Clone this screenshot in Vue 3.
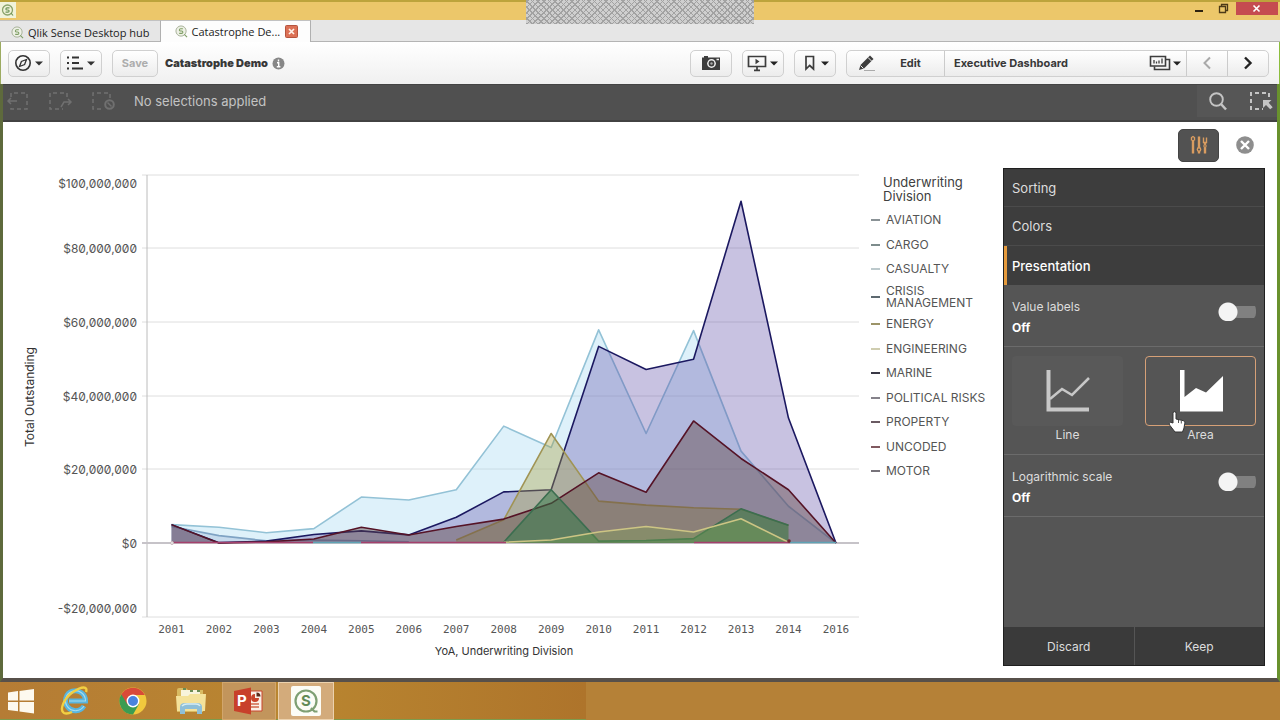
<script setup>
import { ref } from 'vue'

const years = [2001, 2002, 2003, 2004, 2005, 2006, 2007, 2008, 2009, 2010, 2011, 2012, 2013, 2014, 2016]
const ZERO = 375
const xAt = (i) => 168.5 + i * 47.46
const yAt = (m) => ZERO - m * 3.675

const series = [
  { name: 'CASUALTY', line: '#93c2d6', fill: '#a3d8f0', alpha: 0.36, start: 0, data: [5, 4.3, 2.8, 3.9, 12.5, 11.7, 14.5, 31.8, 26, 58, 29.8, 57.8, 25, 10, 0] },
  { name: 'CARGO', line: '#7fa3c4', fill: '#8fa8d0', alpha: 0.3, start: 0, data: [4.5, 2, 0.6, 0.8, 0.6, 0.3] },
  { name: 'MARINE', line: '#1b1860', fill: '#5e4ba6', alpha: 0.34, start: 0, data: [5, 0.1, 0.5, 2.3, 3.3, 2.2, 7, 13.9, 14.5, 53.5, 47.2, 50, 93, 34, 0] },
  { name: 'ENERGY', line: '#a09454', fill: '#a8a040', alpha: 0.38, start: 6, data: [0.8, 6.3, 29.8, 11.4, 10.3, 9.6, 9.2, 4.8] },
  { name: 'PROPERTY', line: '#551326', fill: '#5f4444', alpha: 0.44, start: 0, data: [5, 0, 0.3, 1.1, 4.3, 2.2, 4.5, 6.5, 10.8, 19.1, 13.8, 33.2, 23, 14.5, 0] },
  { name: 'CRISIS MANAGEMENT', line: '#3c6e50', fill: '#2f7a48', alpha: 0.5, start: 7, data: [0.2, 14.5, 0.5, 0.7, 1.2, 9.3, 4.8] },
  { name: 'ENGINEERING', line: '#cdc584', fill: '#7fae4c', alpha: 0.28, start: 7, data: [0.2, 0.8, 3, 4.5, 3, 6.6, 0.2] }
]
const points = (s) => s.data.map((v, i) => `${xAt(s.start + i)},${yAt(v)}`).join(' ')
const area = (s) => `${xAt(s.start)},${ZERO} ${points(s)} ${xAt(s.start + s.data.length - 1)},${ZERO}`

const ticks = [
  { label: '$100,000,000', y: 7, text: 20 },
  { label: '$80,000,000', y: 80, text: 85 },
  { label: '$60,000,000', y: 154, text: 159 },
  { label: '$40,000,000', y: 228, text: 233 },
  { label: '$20,000,000', y: 301, text: 306 },
  { label: '$0', y: 375, text: 380 },
  { label: '-$20,000,000', y: 449, text: 445 }
]

const legend = [
  { name: 'AVIATION', color: '#8a9296' },
  { name: 'CARGO', color: '#7d8c8c' },
  { name: 'CASUALTY', color: '#bcc9cc' },
  { name: 'CRISIS MANAGEMENT', color: '#5d6970' },
  { name: 'ENERGY', color: '#9c9468' },
  { name: 'ENGINEERING', color: '#cfcdb0' },
  { name: 'MARINE', color: '#3a3846' },
  { name: 'POLITICAL RISKS', color: '#85828a' },
  { name: 'PROPERTY', color: '#6a5a62' },
  { name: 'UNCODED', color: '#80595f' },
  { name: 'MOTOR', color: '#77737a' }
]

const chartType = ref('area')
const valueLabels = ref(false)
const logScale = ref(false)
</script>

<template>
  <div class="desktop">
    <header class="titlebar">
      <svg class="app-mark" viewBox="0 0 16 16" aria-hidden="true"><rect width="16" height="16" fill="#f1f3da" /><circle cx="7.500" cy="8" r="5" fill="none" stroke="#8aa36a" stroke-width="1.300" /><path d="M9.500 5.800H7a1.100 1.100 0 0 0 0 2.200h1a1.100 1.100 0 0 1 0 2.200H5.500M11 11l2 2.500" fill="none" stroke="#6d9455" stroke-width="1.200" /></svg>
      <div class="hatch"></div>
      <div class="window-buttons">
        <button aria-label="Minimize"><svg width="10" height="12" viewBox="0 0 10 12"><path d="M1 8h8" stroke="#2d2210" stroke-width="2" /></svg></button>
        <button aria-label="Restore"><svg width="12" height="12" viewBox="0 0 12 12"><path d="M1.500 3.500h6v6h-6zM3.500 3.500V1.500h6v6h-2" fill="none" stroke="#4d3a18" stroke-width="1.300" /></svg></button>
        <button class="close" aria-label="Close"><svg width="10" height="10" viewBox="0 0 10 10"><path d="M1.500 1.500l6 6M7.500 1.500l-6 6" stroke="#fff" stroke-width="1.600" /></svg></button>
      </div>
    </header>

    <nav class="tabs">
      <div class="tab">
        <svg class="q" viewBox="0 0 14 14" aria-hidden="true"><circle cx="6.500" cy="6.500" r="5.500" fill="#eef1e6" stroke="#a3ad95" /><path d="M8.500 4H6a1.200 1.200 0 0 0 0 2.500h1.200a1.200 1.200 0 0 1 0 2.500H4.500M10 10l3 3" fill="none" stroke="#7f9f66" stroke-width="1.200" /></svg>
        <a href="#hub">Qlik Sense Desktop hub</a>
      </div>
      <div class="tab active">
        <svg class="q" viewBox="0 0 14 14" aria-hidden="true"><circle cx="6.500" cy="6.500" r="5.500" fill="#eef1e6" stroke="#a3ad95" /><path d="M8.500 4H6a1.200 1.200 0 0 0 0 2.500h1.200a1.200 1.200 0 0 1 0 2.500H4.500M10 10l3 3" fill="none" stroke="#7f9f66" stroke-width="1.200" /></svg>
        <a href="#app">Catastrophe De...</a>
        <button aria-label="Close tab"><svg width="13" height="13" viewBox="0 0 13 13"><rect x=".5" y=".5" width="12" height="12" rx="1" fill="#dc7156" stroke="#b5543e" /><path d="M4 4l5 5M9 4l-5 5" stroke="#fff3ea" stroke-width="1.700" /></svg></button>
      </div>
    </nav>

    <div class="toolbar">
      <button class="tool" aria-label="Navigation">
        <svg width="30" height="18" viewBox="0 0 30 18"><circle cx="9" cy="9" r="7.200" fill="none" stroke="#333" stroke-width="1.600" /><path d="M12.500 5.500L10.600 10.600 5.500 12.500 7.400 7.400z" fill="none" stroke="#333" stroke-width="1.300" /><path d="M21 7.500h8l-4 4z" fill="#333" /></svg>
      </button>
      <button class="tool" aria-label="Menu">
        <svg width="30" height="18" viewBox="0 0 30 18"><path d="M1 3.500h2M1 9h2M1 14.500h2M6 3.500h7M6 9h7M6 14.500h11" stroke="#333" stroke-width="1.800" /><path d="M21 7.500h8l-4 4z" fill="#333" /></svg>
      </button>
      <button class="tool save" disabled>Save</button>
      <strong class="app-name">Catastrophe Demo</strong>
      <svg class="info" width="13" height="13" viewBox="0 0 13 13" aria-hidden="true"><circle cx="6.500" cy="6.500" r="6" fill="#878787" /><path d="M6.500 2.500v2M5 5.800h1.700v4M4.800 9.800h3.600" stroke="#fff" stroke-width="1.400" fill="none" /></svg>
      <div class="spacer"></div>
      <button class="tool" aria-label="Snapshot">
        <svg width="20" height="18" viewBox="0 0 20 18"><path d="M1 3.500h2V2h4v1.500h12V16H1z" fill="#3d3d3d" /><circle cx="10.500" cy="9.500" r="4.400" fill="#eee" /><circle cx="10.500" cy="9.500" r="2.900" fill="#3d3d3d" /><circle cx="10.500" cy="9.500" r="1.200" fill="#aaa" /><path d="M15.500 5.500H18" stroke="#eee" stroke-width="1.500" /></svg>
      </button>
      <button class="tool" aria-label="Storytelling">
        <svg width="32" height="18" viewBox="0 0 32 18"><path d="M1.500 2.500h17v10h-17zM10 12.500V16M7 16.300h6" fill="none" stroke="#3d3d3d" stroke-width="1.700" /><path d="M8.500 4.800v5.400l4-2.700z" fill="#3d3d3d" /><path d="M23 7.500h8L27 11.500z" fill="#222" /></svg>
      </button>
      <button class="tool" aria-label="Bookmarks">
        <svg width="28" height="18" viewBox="0 0 28 18"><path d="M5 2.500h7.500V15L8.700 11.500 5 15z" fill="none" stroke="#3d3d3d" stroke-width="1.700" /><path d="M20 7.500h8l-4 4z" fill="#222" /></svg>
      </button>
      <div class="sheet-group">
        <button class="edit">
          <svg width="18" height="18" viewBox="0 0 18 18"><path d="M1 16l1.500-5L12 1.500 15.500 5 6 14.500z" fill="#3d3d3d" /><path d="M10 3.500l3.500 3.500M2.500 11.500l3 3" stroke="#eee" /><path d="M6 16.500h11" stroke="#aaa" /></svg>
          <span>Edit</span>
        </button>
        <button class="sheet">
          <span>Executive Dashboard</span>
          <svg width="32" height="18" viewBox="0 0 32 18"><path d="M1.500 2.500h15v9.500h-15z" fill="none" stroke="#3d3d3d" stroke-width="1.600" /><path d="M17 5.500h3.500v10H5.500V12.500" fill="none" stroke="#3d3d3d" stroke-width="1.600" /><path d="M5 6v3.500M7.500 7.500v2M10 6.500v3M13 4.500v5" stroke="#3d3d3d" stroke-width="1.300" /><path d="M24 7.500h8l-4 4z" fill="#222" /></svg>
        </button>
        <button class="step" aria-label="Previous sheet"><svg width="10" height="14" viewBox="0 0 10 14"><path d="M8 1.500L2.500 7 8 12.500" fill="none" stroke="#a9a9a9" stroke-width="2" /></svg></button>
        <button class="step" aria-label="Next sheet"><svg width="10" height="14" viewBox="0 0 10 14"><path d="M2 1.500L7.500 7 2 12.500" fill="none" stroke="#222" stroke-width="2.400" /></svg></button>
      </div>
    </div>

    <div class="frame">
      <div class="selections">
        <button disabled aria-label="Step back"><svg width="24" height="20" viewBox="0 0 24 20"><path d="M5 6V2h16v16H5v-4" fill="none" stroke="#707070" stroke-width="1.500" stroke-dasharray="4 3" /><path d="M11 10H2M5 7l-3 3 3 3" fill="none" stroke="#707070" stroke-width="1.500" /></svg></button>
        <button disabled aria-label="Step forward"><svg width="25" height="20" viewBox="0 0 25 20"><path d="M19 6V2H2v16h13" fill="none" stroke="#707070" stroke-width="1.500" stroke-dasharray="4 3" /><path d="M13 16l3-5h7M20 8l3 3-3 3" fill="none" stroke="#707070" stroke-width="1.500" /></svg></button>
        <button disabled aria-label="Clear all selections"><svg width="25" height="20" viewBox="0 0 25 20"><path d="M19 7V2H2v16h10" fill="none" stroke="#707070" stroke-width="1.500" stroke-dasharray="4 3" /><circle cx="18.500" cy="13.500" r="4.300" fill="none" stroke="#707070" stroke-width="2" /><path d="M16.500 11.500l4 4" stroke="#707070" stroke-width="1.400" /></svg></button>
        <span class="none">No selections applied</span>
        <div class="right">
          <button aria-label="Search"><svg width="20" height="20" viewBox="0 0 20 20"><circle cx="8.500" cy="8.500" r="6.300" fill="none" stroke="#c4c4c4" stroke-width="1.900" /><path d="M13 13l5 5.500" stroke="#c4c4c4" stroke-width="2.500" /></svg></button>
          <button aria-label="Selections tool"><svg width="24" height="20" viewBox="0 0 24 20"><path d="M20 6V2H2v16h12" fill="none" stroke="#c4c4c4" stroke-width="2" stroke-dasharray="4 3" /><path d="M14 9h8.500l-2.800 2.800 4 4.500-2.500 2-4.200-4.200L14 17z" fill="#c4c4c4" /></svg></button>
        </div>
      </div>

      <main class="content">
        <div class="chart-tools">
          <button class="explore" aria-label="Exploration menu"><svg width="20" height="20" viewBox="0 0 20 20"><path d="M4 5v13.500M10 1.500v17M16 8v10.500" stroke="#d99c60" stroke-width="2.400" /><path d="M2.500 5.500v-3L4 1.500l1.500 1v3M14.500 2.500v5h3v-5" fill="none" stroke="#d99c60" stroke-width="1.400" /><circle cx="10" cy="14.500" r="1.700" fill="#525252" stroke="#d99c60" stroke-width="1.400" /><circle cx="16" cy="11" r="1.200" fill="#525252" stroke="#d99c60" /></svg></button>
          <button class="exit" aria-label="Close exploration"><svg width="18" height="18" viewBox="0 0 18 18"><circle cx="9" cy="9" r="8.800" fill="#8e8e8e" /><path d="M5 5l8 8M13 5l-8 8" stroke="#fff" stroke-width="2.400" /></svg></button>
        </div>

        <svg class="chart" viewBox="0 0 861 498" role="img" aria-label="Total Outstanding by year and underwriting division">
          <g class="grid">
            <line v-for="t in ticks" :key="t.label" x1="139" x2="856" :y1="t.y" :y2="t.y" />
            <line class="axis" x1="144" x2="144" y1="7" y2="449" />
          </g>
          <line class="zero" x1="139" x2="856" y1="375" y2="375" />
          <g v-for="s in series" :key="s.name">
            <polygon :points="area(s)" :fill="s.fill" :fill-opacity="s.alpha" />
            <polyline :points="points(s)" :stroke="s.line" fill="none" stroke-width="1.600" stroke-linejoin="round" />
          </g>
          <path d="M169 374.500h141M358 374.500h145M691 374.500h96" stroke="#a5406c" stroke-width="1.500" />
          <path d="M310 374.500h48M787 374.500h46" stroke="#5fa3b5" stroke-width="1.500" />
          <circle cx="169" cy="375" r="1.500" fill="#eee" stroke="#c8b8bc" />
          <circle cx="786" cy="373" r="1.800" fill="#6d2b33" />
          <g class="y-label">
            <text v-for="t in ticks" :key="t.label" x="134" :y="t.text">{{ t.label }}</text>
          </g>
          <g class="x-label">
            <text v-for="(y, i) in years" :key="y" :x="xAt(i)" y="465">{{ y }}</text>
          </g>
          <text class="axis-title" x="501" y="487">YoA, Underwriting Division</text>
          <text class="axis-title side" transform="translate(31 229) rotate(-90)">Total Outstanding</text>
        </svg>

        <section class="legend">
          <h2>Underwriting Division</h2>
          <ul>
            <li v-for="l in legend" :key="l.name"><i :style="{ background: l.color }"></i><span>{{ l.name }}</span></li>
          </ul>
        </section>

        <aside class="panel">
          <button class="head">Sorting</button>
          <button class="head">Colors</button>
          <button class="head current">Presentation</button>
          <div class="option">
            <label for="value-labels">Value labels<b>{{ valueLabels ? 'On' : 'Off' }}</b></label>
            <input id="value-labels" v-model="valueLabels" class="switch" type="checkbox" />
          </div>
          <div class="types">
            <label class="type">
              <input v-model="chartType" type="radio" name="type" value="line" />
              <span class="tile"><svg width="44" height="44" viewBox="0 0 44 44"><path d="M2.500 1v39.500H43" fill="none" stroke="#c8c8c8" stroke-width="4" /><path d="M4 30l12-10 10 6L43 9" fill="none" stroke="#c8c8c8" stroke-width="2.500" /></svg></span>
              <span>Line</span>
            </label>
            <label class="type">
              <input v-model="chartType" type="radio" name="type" value="area" />
              <span class="tile"><svg width="44" height="44" viewBox="0 0 44 44"><path d="M1 1h4.500v27L17 19l10 4.500L44 7v35.500H1z" fill="#fff" /></svg></span>
              <span>Area</span>
              <svg class="pointer" width="18" height="22" viewBox="0 0 18 22" aria-hidden="true"><path d="M5 12V2.200a1.500 1.500 0 0 1 3 0V8l7 1.600c1.500.4 2 1.200 1.800 2.600L16 17l-1.500 4H7L2 14.500c-1-1.800-.8-3 .6-3.200z" fill="#fff" stroke="#333" stroke-width="1" /><path d="M10.500 9v3M13.300 9.500v3" stroke="#555" /></svg>
            </label>
          </div>
          <div class="option">
            <label for="log-scale">Logarithmic scale<b>{{ logScale ? 'On' : 'Off' }}</b></label>
            <input id="log-scale" v-model="logScale" class="switch" type="checkbox" />
          </div>
          <footer>
            <button>Discard</button>
            <button>Keep</button>
          </footer>
        </aside>
      </main>
    </div>

    <nav class="taskbar">
      <button class="start" aria-label="Start"><svg width="28" height="26" viewBox="0 0 28 26"><path d="M1 4.500l10-1.400v9.400H1zM12.500 2.900L27 1v11.500H12.500zM1 14h10v9.300L1 22zM12.500 14H27v11.500L12.500 23.500z" fill="#fdf9ef" /></svg></button>
      <button aria-label="Internet Explorer"><svg width="32" height="32" viewBox="0 0 32 32"><path d="M25 21a10 10 0 1 1 1.500-5H10" fill="none" stroke="#58b6df" stroke-width="5" /><path d="M25 21a10 10 0 1 1 1.500-5H10" fill="none" stroke="#a4dcef" stroke-width="1.200" /><path d="M5 28C0 25 5 13 14 7S29 1 27 7M5 28c3 1.500 6 0 8-1" fill="none" stroke="#f2cf42" stroke-width="2.400" /></svg></button>
      <button aria-label="Chrome"><svg width="28" height="28" viewBox="0 0 28 28"><circle cx="14" cy="14" r="13.500" fill="#f1c93d" /><path d="M14 14L2.300 7.200A13.500 13.500 0 0 0 14 27.500l5.800-10z" fill="#3c9c52" /><path d="M14 14v-6h11.900A13.500 13.500 0 0 0 2.300 7.200L8.500 17.500z" fill="#d94a38" /><circle cx="14" cy="14" r="6.400" fill="#fff" /><circle cx="14" cy="14" r="5" fill="#4a83dd" /></svg></button>
      <button aria-label="File Explorer"><svg width="32" height="30" viewBox="0 0 32 30"><path d="M2 4q0-2 2-2h7l2 2h15v22H2z" fill="#d9bb62" /><path d="M6 4h19v8H6z" fill="#f8f4dc" /><path d="M8 3h3M15 5h3M22 5h3" stroke="#6b8c52" stroke-width="2" /><path d="M1 10h12l2-2h16l-1 17H2z" fill="#f4e29a" /><path d="M5 28v-7q0-4 5-4h12q5 0 5 4v7h-5v-5H10v5z" fill="#8ebfd8" /><path d="M7 20q2-2 5-2h9q3 0 4 2" fill="none" stroke="#d6edf3" stroke-width="1.500" /></svg></button>
      <button class="open" aria-label="PowerPoint"><svg width="30" height="28" viewBox="0 0 30 28"><path d="M15 4h14v20H15z" fill="#fbf1e8" stroke="#c9452c" /><path d="M18 17h8M18 20h8" stroke="#d16a4c" stroke-width="1.500" /><path d="M22 7a4 4 0 1 0 4 4h-4z" fill="#c9452c" /><path d="M23.500 5.500v4h4a4 4 0 0 0-4-4z" fill="#5c2c1c" /><path d="M1 4l17-3.500v27L1 24z" fill="#c8402a" /><text class="mark-p" x="4" y="19">P</text></svg></button>
      <button class="open focus" aria-label="Qlik Sense"><svg width="30" height="30" viewBox="0 0 30 30"><rect width="30" height="30" rx="2" fill="#fcfcf6" /><circle cx="15" cy="15" r="10.500" fill="none" stroke="#7e9f73" stroke-width="2.200" /><path d="M20 22l3.500 3.500h3" fill="none" stroke="#7e9f73" stroke-width="2.200" /><text class="mark-s" x="10" y="20">S</text></svg></button>
    </nav>
  </div>
</template>

<style>
body { background: #b58137; }
</style>

<style scoped>
* { box-sizing: border-box; }
button { font: inherit; color: inherit; border: 0; padding: 0; background: none; display: flex; align-items: center; justify-content: center; }
a { color: inherit; text-decoration: none; }
svg { display: block; flex: none; }
.desktop { min-height: 100vh; display: flex; flex-direction: column; font-family: Inter, "Liberation Sans", sans-serif; font-size: 12px; color: #404040; }
.titlebar { position: relative; height: 20px; background: #ecc76a; border-top: 2px solid #bda43c; display: flex; justify-content: space-between; }
.app-mark { width: 16px; height: 16px; }
.hatch { position: absolute; z-index: 1; top: -2px; left: 50%; width: 228px; height: 24px; transform: translateX(-50%); background: repeating-linear-gradient(45deg, #a2a2a2 0 1px, transparent 1px 4px), repeating-linear-gradient(-45deg, #a2a2a2 0 1px, transparent 1px 4px), #cfcfcf; }
.window-buttons { display: flex; height: 13px; padding-right: 2px; }
.window-buttons button { width: 25px; }
.window-buttons .close { width: 42px; background: #c54c50; }
.tabs { height: 22px; background: #e6e6e6; border-bottom: 1px solid #b4b4b4; display: flex; font-family: "Open Sans", sans-serif; font-size: 11px; color: #222; }
.tab { display: flex; align-items: center; gap: 4px; padding: 2px 10px 0 11px; height: 21px; border-right: 1px solid #b0b0b0; border-top: 1px solid #c2c2c2; white-space: nowrap; }
.tab.active { height: 22px; background: #fdfdfd; padding: 0 12px 0 14px; }
.q { width: 13px; height: 13px; }
.tab button { margin-left: 1px; }
.toolbar { height: 42px; flex: none; display: flex; align-items: center; padding: 0 10px 0 7px; gap: 10px; background: linear-gradient(#fff, #f0f0f0); border-left: 1px solid #9cab61; border-right: 1px solid #8cbd3e; font-weight: 700; font-size: 11px; color: #383838; }
.tool, .sheet-group { height: 27px; border: 1px solid #d0d0d0; border-radius: 5px; background: linear-gradient(#fff, #ececec); }
.tool { width: 42px; }
.save { width: 46px; color: #adadad; }
.app-name { margin-left: -3px; }
.info { margin-left: -6px; }
.spacer { flex: 1; }
.sheet-group { display: flex; }
.sheet-group button + button { border-left: 1px solid #cbcbcb; }
.edit { width: 97px; gap: 24px; padding-right: 12px !important; }
.sheet { width: 242px; justify-content: space-between !important; padding: 0 5px 0 9px !important; }
.step { width: 41px; }
.frame { flex: 1; display: flex; flex-direction: column; border: 3px solid #5e6a3c; border-top: 0; border-right-color: #69922d; border-bottom: 4px solid #57504a; }
.selections { height: 38px; flex: none; background: #505050; border-top: 1px solid #444; border-bottom: 2px solid #424242; display: flex; align-items: center; padding: 0 0 3px 3px; gap: 18px; }
.none { color: #c3c3c3; font-size: 13px; }
.right { margin-left: auto; height: 100%; display: flex; align-items: center; gap: 21px; padding: 0 4px 0 11px; background: #565656; }
.content { flex: 1; background: #fff; display: grid; grid-template-columns: minmax(0, 1fr) 139px 262px; grid-template-rows: 46px minmax(498px, 1fr); padding: 0 12px 12px 0; }
.chart-tools { grid-column: 1 / -1; display: flex; justify-content: flex-end; align-items: center; gap: 17px; padding-right: 11px; }
.explore { width: 41px; height: 33px; border-radius: 5px; background: #525252; border: 1px solid #444; }
.chart { width: 100%; align-self: start; }
.grid line { stroke: #dedede; }
.grid .axis { stroke: #bcbcbc; }
.zero { stroke: #c6c3c8; stroke-width: 2px; }
.chart text { font-family: Inter, sans-serif; fill: #555; }
.y-label text { font-size: 12px; text-anchor: end; font-feature-settings: "zero"; }
.x-label text { font-size: 11px; text-anchor: middle; font-family: "DejaVu Sans Mono", monospace; }
.chart .axis-title { font-size: 11px; text-anchor: middle; fill: #333; }
.chart .side { font-size: 12px; }
.mark-p, .mark-s { font-size: 15px; font-weight: 700; fill: #fff; }
.mark-s { fill: #638b58; }
.legend { padding: 7px 0 0 7px; color: #555; }
.legend h2 { margin: 0 0 8px 12px; width: 100px; font-size: 13px; line-height: 14px; font-weight: 400; color: #404040; }
.legend ul { list-style: none; margin: 0; padding: 0; height: 269px; display: flex; flex-direction: column; justify-content: space-between; }
.legend li { display: flex; align-items: center; gap: 6px; min-height: 18px; line-height: 12px; }
.legend i { width: 9px; height: 2px; flex: none; }
.panel { display: flex; flex-direction: column; background: #555; border: 1px solid #1f1f1f; border-top: 0; box-shadow: inset 0 1px #1f1f1f; color: #ddd; }
.head { height: 39px; flex: none; justify-content: flex-start; padding-left: 8px; background: #3d3d3d; border-bottom: 1px solid #4b4b4b; font-size: 13px; }
.head:first-child { border-top: 1px solid #1f1f1f; }
.head.current { border-left: 3px solid #e59a3c; padding-left: 5px; color: #fff; border-bottom: 0; font-weight: 500; }
.option { display: flex; justify-content: space-between; align-items: flex-start; padding: 11px 8px 8px; border-bottom: 1px solid #6b6b6b; height: 62px; }
.option label { line-height: 21px; display: flex; flex-direction: column; }
.option b { color: #fff; }
.switch { appearance: none; margin: 6px 0 0; width: 38px; height: 19px; background: radial-gradient(circle at 10px 10px, #f4f4f4 9px, transparent 10px), linear-gradient(#808080, #808080) 8px 4px / 30px 12px no-repeat; border-radius: 8px; }
.switch:checked { background: radial-gradient(circle at 28px 10px, #f4f4f4 9px, transparent 10px), linear-gradient(#7aa34c, #7aa34c) 0 4px / 30px 12px no-repeat; }
.types { height: 108px; display: flex; justify-content: space-between; padding: 9px 8px 0; border-bottom: 1px solid #6b6b6b; }
.type { position: relative; width: 111px; display: flex; flex-direction: column; align-items: center; gap: 1px; }
.type input { position: absolute; opacity: 0; margin: 0; }
.tile { width: 100%; height: 70px; border: 1px solid transparent; border-radius: 4px; background: #595959; display: flex; align-items: center; justify-content: center; }
.type input:checked + .tile { background: transparent; border-color: #d6a077; }
.pointer { position: absolute; left: 23px; top: 55px; }
.panel footer { margin-top: auto; height: 38px; display: flex; background: #3a3a3a; }
.panel footer button { flex: 1; }
.panel footer button + button { border-left: 1px solid #555; }
.taskbar { height: 38px; flex: none; display: flex; background: linear-gradient(90deg, #b57c35, #b98630 50%, #ae742b) 0 0 / 586px 37px no-repeat, linear-gradient(#7e9c4d, #7e9c4d) 0 100% / 586px 1px no-repeat, #b58137; }
.taskbar button { width: 58px; }
.taskbar .start { width: 42px; margin-right: 4px; }
.taskbar .open { width: 54px; margin-left: 2px; padding-right: 3px; border: 1px solid #d2a66b; background: #c2955c; }
.taskbar .focus { width: 56px; padding: 0; background: #d3ab7b; border-color: #ecd2ae; }
</style>
